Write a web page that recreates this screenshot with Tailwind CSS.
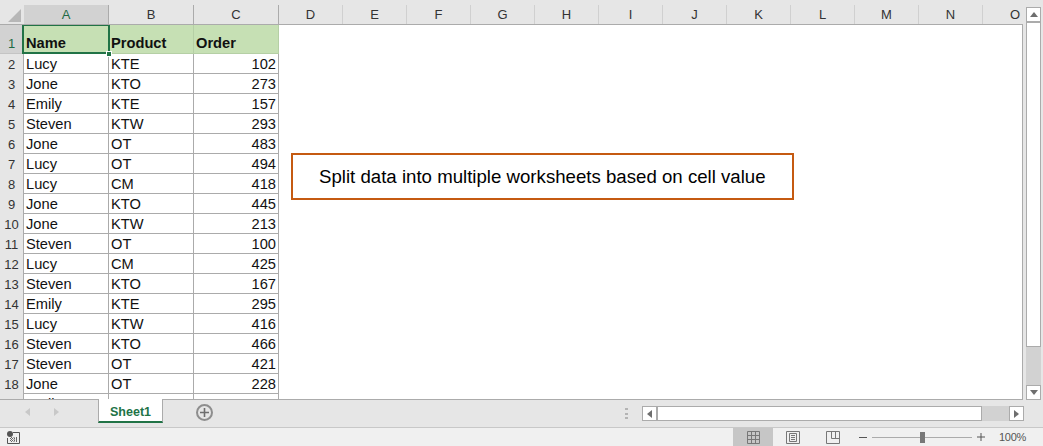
<!DOCTYPE html>
<html><head><meta charset="utf-8"><script src="https://cdn.jsdelivr.net/npm/@tailwindcss/browser@4"></script></head>
<body class="m-0 overflow-hidden bg-[#e6e6e6]">
<div class="w-[1043px] h-[446px] flex flex-col overflow-hidden font-['Liberation_Sans',Arial,sans-serif] text-[14.67px] text-[#111] bg-[#e6e6e6]">
  <div class="h-[400px] flex shrink-0 pt-[5px]">
    <div class="w-[1023px] flex flex-col shrink-0">
      <div class="h-[20px] flex shrink-0 text-[13px] text-[#333] leading-[20px] text-center border-b border-[#ababab]">
        <div class="w-[24px] shrink-0 flex items-end justify-end pr-[3px] pb-[2px]"><svg width="13" height="13" viewBox="0 0 13 13"><path d="M13 0V13H0Z" fill="#b7b7b7"/></svg></div>
        <div class="w-[85px] shrink-0 bg-[#d2d2d2] text-[#1e6b45] border-r border-[#ababab]">A</div>
        <div class="w-[85px] shrink-0 border-r border-[#ababab]">B</div>
        <div class="w-[85px] shrink-0 border-r border-[#ababab]">C</div>
        <div class="w-[64px] shrink-0 border-r border-[#d0d0d0]">D</div>
        <div class="w-[64px] shrink-0 border-r border-[#d0d0d0]">E</div>
        <div class="w-[64px] shrink-0 border-r border-[#d0d0d0]">F</div>
        <div class="w-[64px] shrink-0 border-r border-[#d0d0d0]">G</div>
        <div class="w-[64px] shrink-0 border-r border-[#d0d0d0]">H</div>
        <div class="w-[64px] shrink-0 border-r border-[#d0d0d0]">I</div>
        <div class="w-[64px] shrink-0 border-r border-[#d0d0d0]">J</div>
        <div class="w-[64px] shrink-0 border-r border-[#d0d0d0]">K</div>
        <div class="w-[64px] shrink-0 border-r border-[#d0d0d0]">L</div>
        <div class="w-[64px] shrink-0 border-r border-[#d0d0d0]">M</div>
        <div class="w-[64px] shrink-0 border-r border-[#d0d0d0]">N</div>
        <div class="w-[64px] shrink-0">O</div>
      </div>
      <div class="relative flex-1 flex overflow-hidden border-b border-[#ababab] min-h-0">
        <div class="w-[24px] shrink-0 flex flex-col text-[13px] text-[#333] text-center border-r border-[#ababab] bg-[#e6e6e6]">
          <div class="h-[29px] shrink-0 flex items-end justify-center bg-[#d2d2d2] text-[#1e6b45] border-b border-[#c4c4c4]">1</div>
          <div class="h-[20px] shrink-0 leading-[22px]">2</div><div class="h-[20px] shrink-0 leading-[22px]">3</div><div class="h-[20px] shrink-0 leading-[22px]">4</div><div class="h-[20px] shrink-0 leading-[22px]">5</div><div class="h-[20px] shrink-0 leading-[22px]">6</div><div class="h-[20px] shrink-0 leading-[22px]">7</div><div class="h-[20px] shrink-0 leading-[22px]">8</div><div class="h-[20px] shrink-0 leading-[22px]">9</div><div class="h-[20px] shrink-0 leading-[22px]">10</div><div class="h-[20px] shrink-0 leading-[22px]">11</div><div class="h-[20px] shrink-0 leading-[22px]">12</div><div class="h-[20px] shrink-0 leading-[22px]">13</div><div class="h-[20px] shrink-0 leading-[22px]">14</div><div class="h-[20px] shrink-0 leading-[22px]">15</div><div class="h-[20px] shrink-0 leading-[22px]">16</div><div class="h-[20px] shrink-0 leading-[22px]">17</div><div class="h-[20px] shrink-0 leading-[22px]">18</div>
        </div>
        <div class="flex-1 bg-white border-r border-[#ababab] min-w-0">
          <div class="grid grid-cols-[85px_85px_85px] grid-rows-[29px_repeat(18,20px)] w-[255px] [&>div]:border-r [&>div]:border-b [&>div]:border-[#ababab] [&>div]:px-[2px] [&>div]:leading-[21px]">
            <div class="!leading-[36px] bg-[#c6e0b4] font-bold !border-[#b5cfa5]">Name</div><div class="!leading-[36px] bg-[#c6e0b4] font-bold !border-[#b5cfa5]">Product</div><div class="!leading-[36px] bg-[#c6e0b4] font-bold !border-[#b5cfa5]">Order</div>
            <div>Lucy</div><div>KTE</div><div class="text-right">102</div>
            <div>Jone</div><div>KTO</div><div class="text-right">273</div>
            <div>Emily</div><div>KTE</div><div class="text-right">157</div>
            <div>Steven</div><div>KTW</div><div class="text-right">293</div>
            <div>Jone</div><div>OT</div><div class="text-right">483</div>
            <div>Lucy</div><div>OT</div><div class="text-right">494</div>
            <div>Lucy</div><div>CM</div><div class="text-right">418</div>
            <div>Jone</div><div>KTO</div><div class="text-right">445</div>
            <div>Jone</div><div>KTW</div><div class="text-right">213</div>
            <div>Steven</div><div>OT</div><div class="text-right">100</div>
            <div>Lucy</div><div>CM</div><div class="text-right">425</div>
            <div>Steven</div><div>KTO</div><div class="text-right">167</div>
            <div>Emily</div><div>KTE</div><div class="text-right">295</div>
            <div>Lucy</div><div>KTW</div><div class="text-right">416</div>
            <div>Steven</div><div>KTO</div><div class="text-right">466</div>
            <div>Steven</div><div>OT</div><div class="text-right">421</div>
            <div>Jone</div><div>OT</div><div class="text-right">228</div>
            <div>Emily</div><div>KTW</div><div class="text-right">316</div>
          </div>
        </div>
        <div class="absolute left-[22px] -top-px w-[88px] h-[30px] border-2 border-[#217346]"></div>
        <div class="absolute left-[106px] top-[26px] w-[6px] h-[6px] bg-[#217346] border border-white"></div>
        <div class="absolute left-[291px] top-[128px] w-[503px] h-[47px] bg-white border-2 border-[#c55a11] flex items-center pl-[26px] pt-[1px] text-[18.65px] text-black whitespace-nowrap">Split data into multiple worksheets based on cell value</div>
      </div>
    </div>
    <div class="w-[20px] shrink-0 flex flex-col pl-[3px] pr-[2px] pt-[2px]">
      <div class="h-[15px] shrink-0 bg-white border border-[#ababab] flex items-center justify-center"><svg width="8" height="5" viewBox="0 0 8 5"><path d="M4 0L8 5H0Z" fill="#6e6e6e"/></svg></div>
      <div class="h-[325px] shrink-0 bg-white border border-[#ababab]"></div>
      <div class="flex-1 bg-[#d2d2d2]"></div>
      <div class="h-[15px] shrink-0 bg-white border border-[#ababab] flex items-center justify-center"><svg width="8" height="5" viewBox="0 0 8 5"><path d="M0 0H8L4 5Z" fill="#6e6e6e"/></svg></div>
    </div>
  </div>
  <div class="h-[28px] shrink-0 flex border-b border-[#c8c8c8] relative">
    <div class="w-[98px] shrink-0 flex items-center pl-[25px] gap-[24px] pb-[4px]">
      <svg width="5" height="8" viewBox="0 0 5 8"><path d="M5 0V8L0 4Z" fill="#c8c8c8"/></svg>
      <svg width="5" height="8" viewBox="0 0 5 8"><path d="M0 0V8L5 4Z" fill="#c8c8c8"/></svg>
    </div>
    <div class="w-[65px] h-[24px] shrink-0 -mt-[1px] bg-white border-x border-[#ababab] border-b-2 border-b-[#217346] text-[#217346] font-bold text-[12.500px] text-center leading-[26px]">Sheet1</div>
    <div class="ml-[33px] mt-[4px] w-[17px] h-[17px] rounded-full border-2 border-[#8e8e8e] flex items-center justify-center shrink-0"><svg width="9" height="9" viewBox="0 0 9 9"><path d="M4.500 0V9M0 4.500H9" stroke="#6e6e6e" stroke-width="1.600"/></svg></div>
    <div class="ml-[412px] mt-[8px] w-[3px] h-[11px] flex flex-col justify-between shrink-0"><div class="h-[2px] bg-[#b4b4b4]"></div><div class="h-[2px] bg-[#b4b4b4]"></div><div class="h-[2px] bg-[#b4b4b4]"></div></div>
    <div class="ml-[14px] mt-[6px] w-[382px] h-[15px] flex shrink-0 bg-[#d2d2d2]">
      <div class="w-[15px] shrink-0 bg-white border border-[#ababab] flex items-center justify-center"><svg width="5" height="8" viewBox="0 0 5 8"><path d="M5 0V8L0 4Z" fill="#6e6e6e"/></svg></div>
      <div class="w-[325px] shrink-0 bg-white border border-[#ababab]"></div>
      <div class="flex-1"></div>
      <div class="w-[15px] shrink-0 bg-white border border-[#ababab] flex items-center justify-center"><svg width="5" height="8" viewBox="0 0 5 8"><path d="M0 0V8L5 4Z" fill="#6e6e6e"/></svg></div>
    </div>
  </div>
  <div class="flex-1 flex items-stretch bg-[#f0f0f0] text-[11px] text-[#555]">
    <div class="w-[733px] shrink-0 pl-[7px] pt-[3px]">
      <svg width="13" height="13" viewBox="0 0 13 13"><circle cx="3" cy="3" r="3" fill="#555"/><path d="M6 1.500H12.500V12.500H.5V7" fill="none" stroke="#555"/><path d="M3 7.500H11M3 9.500H11M4.500 6V12M7 6V12M9.500 6V12" stroke="#666" stroke-dasharray="1 1"/></svg>
    </div>
    <div class="w-[40px] shrink-0 bg-[#c6c6c6] flex items-center justify-center"><svg width="13" height="13" viewBox="0 0 13 13"><path d="M.5.500H12.500V12.500H.5ZM.5 4.500H12.500M.5 8.500H12.500M4.500.500V12.500M8.500.500V12.500" fill="none" stroke="#777"/></svg></div>
    <div class="w-[40px] shrink-0 flex items-center justify-center"><svg width="14" height="13" viewBox="0 0 14 13"><path d="M.5.500H13.500V12.500H.5ZM3.500 2.500H10.500V10.500H3.500ZM5 4.500H9M5 6.500H9M5 8.500H9" fill="none" stroke="#777"/></svg></div>
    <div class="w-[40px] shrink-0 flex items-center justify-center"><svg width="14" height="13" viewBox="0 0 14 13"><path d="M.5.500H13.500V12.500H.5ZM5.500.500V7.500H13.500M9.500.500V7.500" fill="none" stroke="#777"/></svg></div>
    <div class="flex items-center shrink-0 pl-[6px]">
      <div class="w-[8px] h-px bg-[#555]"></div>
      <div class="ml-[5px] w-[100px] h-px bg-[#ababab] relative"><div class="absolute left-[48px] -top-[5px] w-[5px] h-[11px] bg-[#777]"></div></div>
      <svg class="ml-[5px]" width="8" height="8" viewBox="0 0 8 8"><path d="M4 0V8M0 4H8" stroke="#555"/></svg>
      <span class="ml-[14px] tracking-[-0.3px]">100%</span>
    </div>
  </div>
</div>
</body></html>
